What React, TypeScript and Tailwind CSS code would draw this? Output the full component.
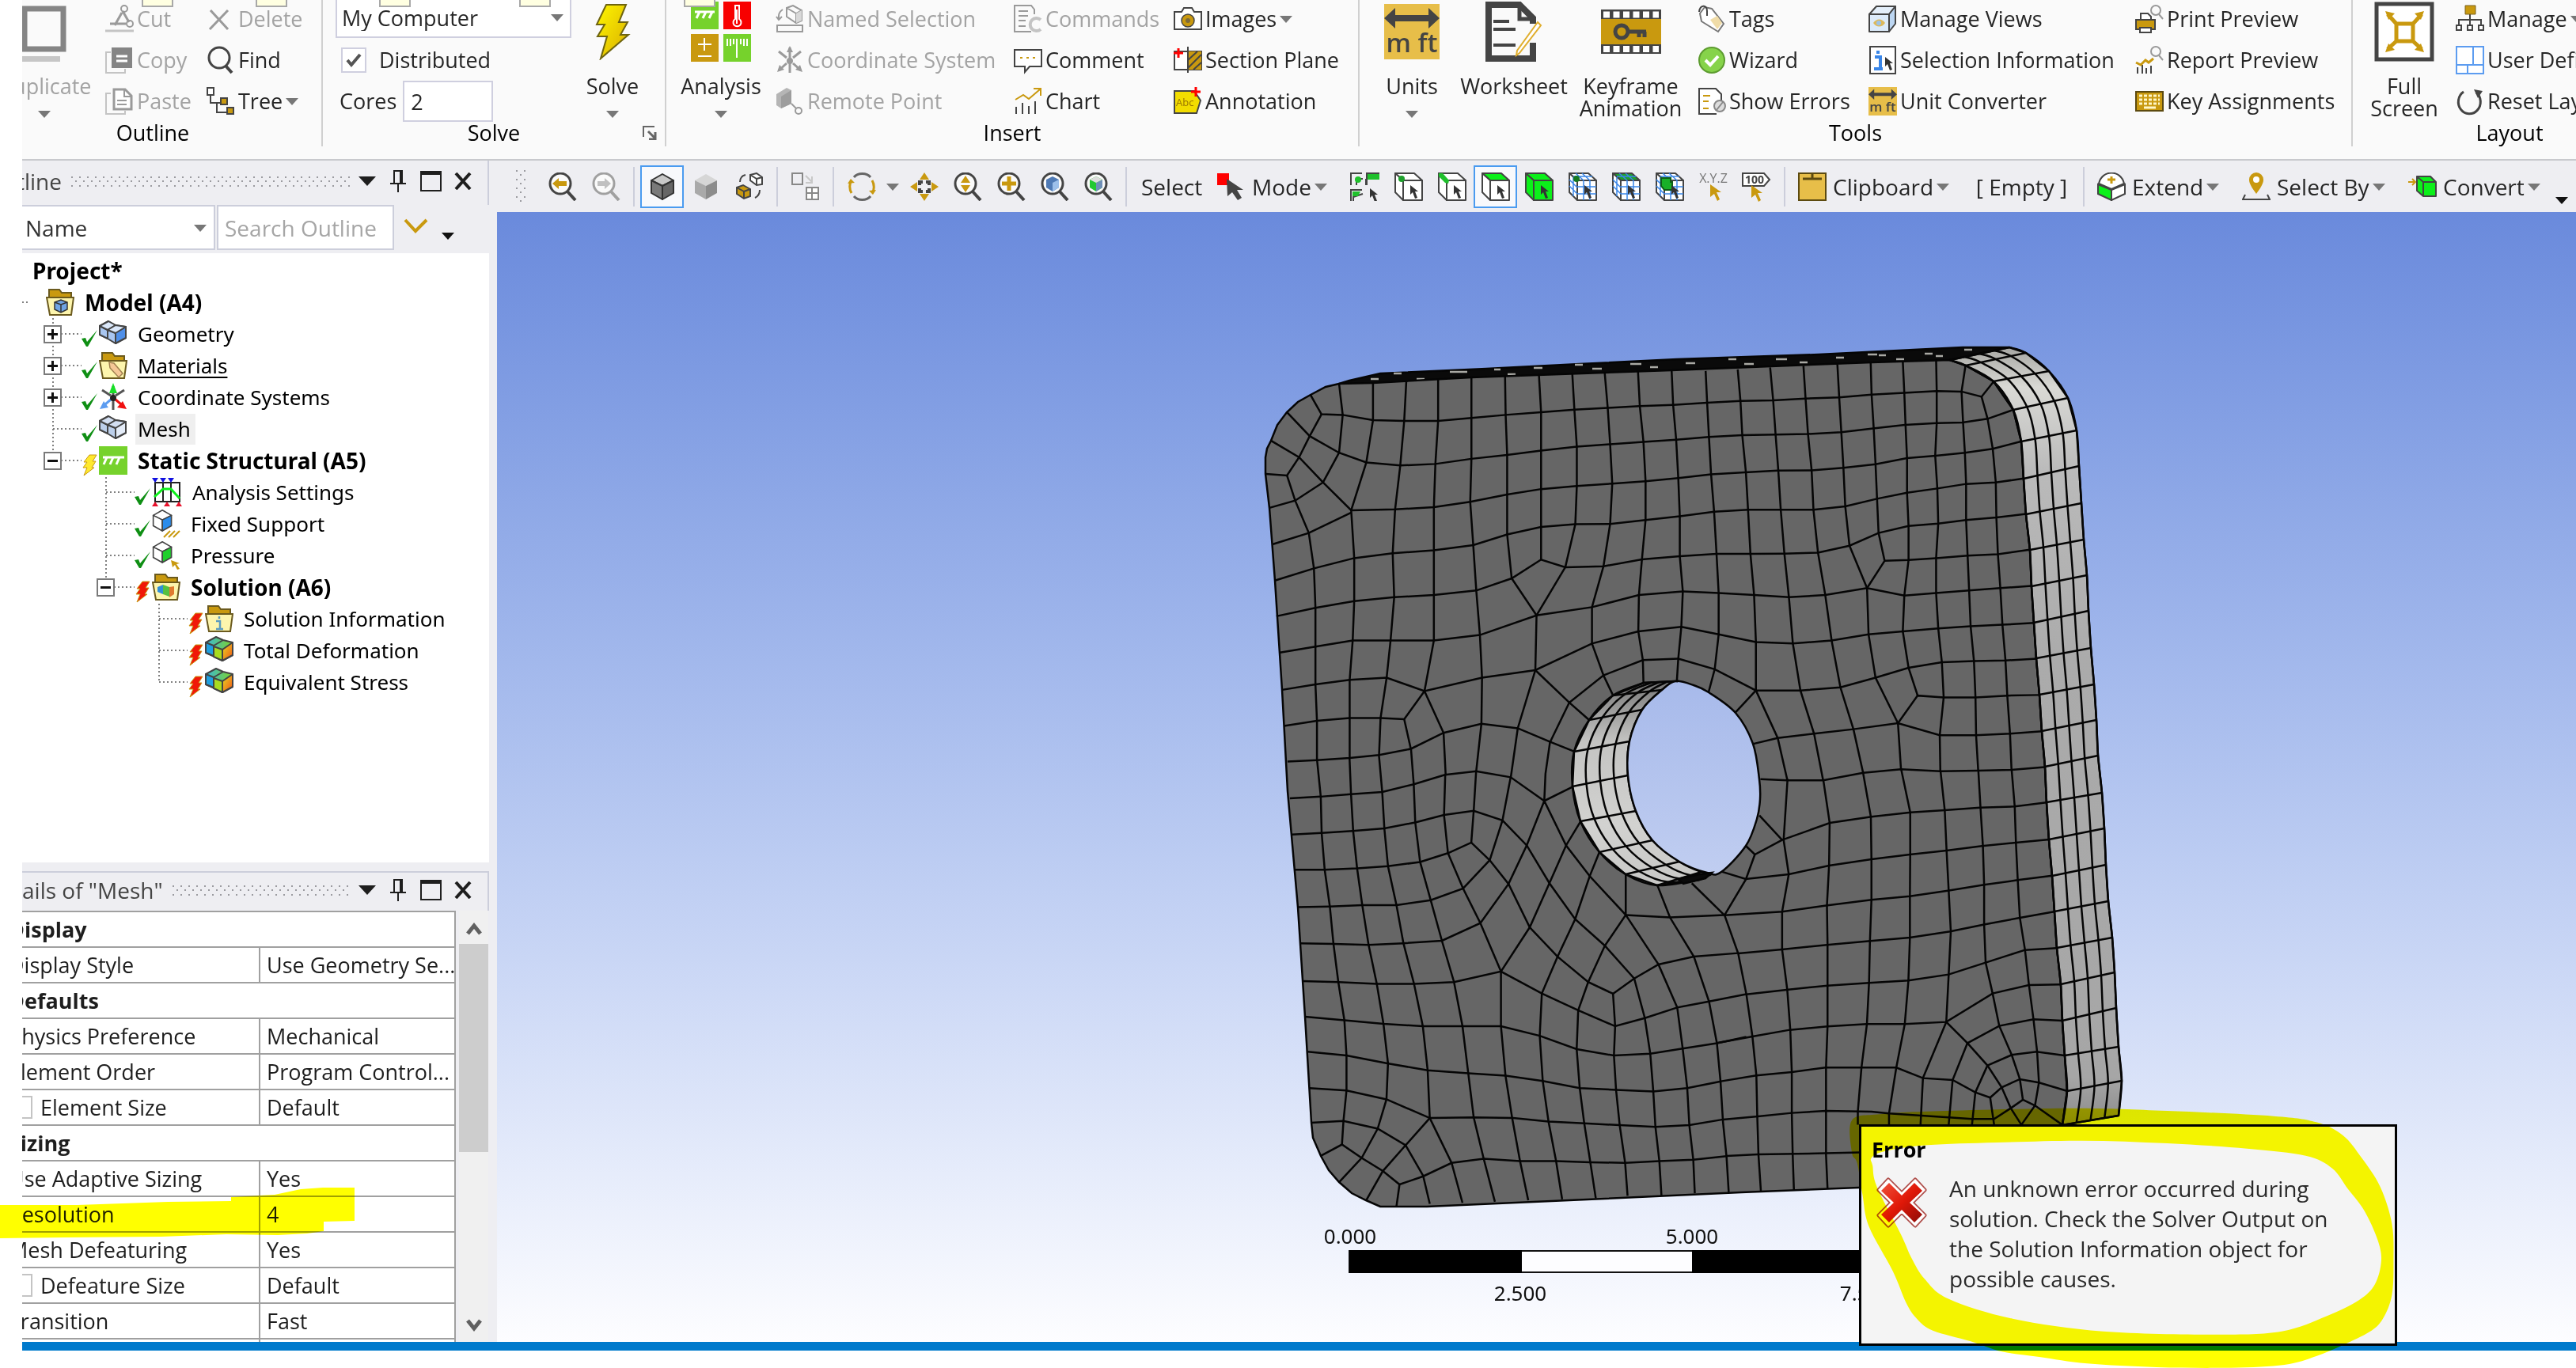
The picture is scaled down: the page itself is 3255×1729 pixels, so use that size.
import React from 'react';

type Pt = [number, number];

const DARK = '#444444';
const GOLD = '#c9990f';
const GREY = '#9a9a9a';

/* ---------- geometry helpers ---------- */

const toPts = (s: string): Pt[] => s.split(' ').map((p) => p.split(',').map(Number) as Pt);

const smooth = (pts: Pt[], closed = false) => {
  const n = pts.length;
  const at = (i: number) => (closed ? pts[(i + n) % n] : pts[Math.max(0, Math.min(n - 1, i))]);
  let d = `M${pts[0][0]} ${pts[0][1]}`;
  for (let i = 0; i < (closed ? n : n - 1); i++) {
    const [a, b, c, e] = [at(i - 1), at(i), at(i + 1), at(i + 2)];
    d += `C${b[0] + (c[0] - a[0]) / 6} ${b[1] + (c[1] - a[1]) / 6} ${c[0] - (e[0] - b[0]) / 6} ${c[1] - (e[1] - b[1]) / 6} ${c[0]} ${c[1]}`;
  }
  return closed ? d + 'Z' : d;
};

const between = (a: Pt[], b: Pt[], t: number): Pt[] =>
  a.map((p, i) => [p[0] + (b[i][0] - p[0]) * t, p[1] + (b[i][1] - p[1]) * t]);

/* ---------- small icons ---------- */

interface IconProps {
  w?: number;
  h?: number;
  box?: string;
  children: React.ReactNode;
}

const Icon: React.FC<IconProps> = ({ w = 36, h = 36, box, children }) => (
  <svg width={w} height={h} viewBox={box ?? `0 0 ${w} ${h}`} fill="none" className="shrink-0" aria-hidden="true">
    {children}
  </svg>
);

const Caret = ({ color = '#777777', w = 16 }: { color?: string; w?: number }) => (
  <Icon w={w} h={10} box="0 0 16 10">
    <path d="M0 1h16L8 10z" fill={color} />
  </Icon>
);

const Mag = ({ color = DARK, children }: { color?: string; children?: React.ReactNode }) => (
  <Icon>
    <ellipse cx="15" cy="14" rx="13" ry="13" fill="#fafafa" stroke={color} strokeWidth="3" />
    <path d="M24 24l10 11" stroke={color} strokeWidth="4" />
    {children}
  </Icon>
);

interface CubeProps {
  top: string;
  left: string;
  right: string;
  line?: string;
}

const IsoShape = ({ top, left, right, line = DARK }: CubeProps) => (
  <g stroke={line} strokeWidth="2" strokeLinejoin="round">
    <path d="M2 9l14-8 14 8-14 7z" fill={top} />
    <path d="M2 9l14 7v17L2 25z" fill={left} />
    <path d="M30 9l-14 7v17l14-8z" fill={right} />
  </g>
);

const IsoCube = (p: CubeProps) => (
  <Icon w={32} h={34}>
    <IsoShape {...p} />
  </Icon>
);

const TwinCubes = ({ a, b, c, d }: { a: string; b: string; c: string; d: string }) => (
  <Icon>
    <g stroke={DARK} strokeWidth="2" strokeLinejoin="round">
      <path d="M1 8l11-6 9 5 13 2v14l-13 7-9-6-11-5z" fill={a} />
      <path d="M1 8l10 5v11L1 19z" fill={b} />
      <path d="M11 13l10 4v13l-10-6z" fill={c} />
      <path d="M34 9v14l-13 7V16z" fill={d} />
      <path d="M1 8l11-6 9 5-10 6z" fill={a} />
      <path d="M11 13l10-6 13 2-13 8z" fill={a} />
    </g>
  </Icon>
);

const Pointer = ({ x = 20, y = 16, color = '#333333' }: { x?: number; y?: number; color?: string }) => (
  <path d={`M${x} ${y}v12l3-3 3 8 3-1-3-8h4z`} fill={color} />
);

interface SelectCubeProps {
  top?: string;
  front?: string;
  side?: string;
  grid?: boolean;
  children?: React.ReactNode;
}

const SelectCube = ({ top = '#fff', front = '#fff', side = '#fff', grid, children }: SelectCubeProps) => (
  <Icon>
    <g stroke={DARK} strokeWidth="2" strokeLinejoin="round">
      <path d="M1 1h24l10 9H11z" fill={top} />
      <path d="M1 1l10 9v25L1 25z" fill={side} />
      <path d="M11 10h24v25H11z" fill={front} />
    </g>
    {grid && (
      <path d="M19 10v25M27 10v25M11 18h24M11 27h24M9 1l10 9M17 1l10 9M1 9l10 10M1 17l10 10M6 6v24M6 5h24" stroke="#3a86e8" strokeWidth="1.5" />
    )}
    {children}
    <Pointer x={20} y={16} />
  </Icon>
);

const Folder = ({ children }: { children?: React.ReactNode }) => (
  <Icon>
    <path d="M4 13V2h13l3 4h12v8z" fill="#c9990f" stroke="#6b5a1e" strokeWidth="2" />
    <path d="M1 12h34l-3 22H5z" fill="#fdf5ad" stroke="#6b5a1e" strokeWidth="2" />
    {children}
  </Icon>
);

const Check = () => (
  <Icon w={20} h={22}>
    <path d="M0 11l5-1 2 5L20 0 8 21H6z" fill="#0f8f14" />
  </Icon>
);

const Bolt = ({ color, edge = '#c9990f' }: { color: string; edge?: string }) => (
  <Icon w={20} h={28}>
    <path d="M10 1h9l-5 8h4l-5 8h3L3 27l4-10H2l5-7H3z" fill={color} stroke={edge} strokeWidth="1" />
  </Icon>
);

const StructuralTile = ({ w = 36 }: { w?: number }) => (
  <Icon w={w} h={w} box="0 0 36 36">
    <path d="M0 0h36v36H0z" fill="#76d22c" />
    <path d="M5 14h27M10 14l-4 9M18 14l-4 9M26 14l-4 9" stroke="#fff" strokeWidth="3" />
  </Icon>
);

const MftTile = ({ w, h }: { w: number; h: number }) => (
  <Icon w={w} h={h} box="0 0 70 70">
    <path d="M0 0h70v70H0z" fill="#e7be49" />
    <path d="M0 18L14 5v9h42V5l14 13-14 13v-9H14v9z" fill={DARK} />
    <text x="35" y="61" textAnchor="middle" fontSize="33" fontWeight="600" fill={DARK} fontFamily="'Open Sans', sans-serif">m ft</text>
  </Icon>
);

const ico = {
  duplicate: (
    <Icon w={60} h={76}>
      <path d="M5 9h49v51H5z" fill="#fafafa" stroke="#858585" strokeWidth="7" />
      <path d="M0 69h50v7H0z" fill="#c6c6c6" />
    </Icon>
  ),
  cut: (
    <Icon>
      <path d="M0 33h36" stroke="#c4c4c4" strokeWidth="3" />
      <path d="M6 24h20M22 8l8 14M21 10L12 26" stroke={GREY} strokeWidth="3" />
      <circle cx="24" cy="5" r="4" stroke={GREY} strokeWidth="2" />
      <circle cx="31" cy="24" r="4" stroke={GREY} strokeWidth="2" />
    </Icon>
  ),
  copy: (
    <Icon>
      <path d="M7 8H1v26h24v-5" stroke="#c4c4c4" strokeWidth="2" />
      <path d="M8 2h26v26H8z" fill="#858585" />
      <path d="M14 13h14M14 19h14" stroke="#fff" strokeWidth="3" />
    </Icon>
  ),
  paste: (
    <Icon>
      <path d="M7 8H1v26h24v-4" stroke="#c4c4c4" strokeWidth="2" />
      <path d="M11 3h14l8 8v17H11z" fill="#fff" stroke={GREY} strokeWidth="3" />
      <path d="M24 3v9h9M15 17h12M15 22h12" stroke={GREY} strokeWidth="2" />
    </Icon>
  ),
  del: (
    <Icon>
      <path d="M5 7l22 24M27 7L4 31" stroke={GREY} strokeWidth="3" />
    </Icon>
  ),
  find: (
    <Icon>
      <circle cx="16" cy="15" r="13" stroke={DARK} strokeWidth="3" />
      <path d="M24 25l8 9" stroke={DARK} strokeWidth="4" />
    </Icon>
  ),
  tree: (
    <Icon>
      <path d="M5 10v10h12M13 20v12h12" stroke={DARK} strokeWidth="2" />
      <path d="M1 1h8v9H1z" fill="#fff" stroke={DARK} strokeWidth="2" />
      <path d="M18 14h8v8h-8zM26 26h8v8h-8z" fill={GOLD} stroke={DARK} strokeWidth="2" />
    </Icon>
  ),
  bolt: (
    <Icon w={46} h={72}>
      <path d="M15 2h25L31 24h11l-9 16h10L8 70l8-28H4l9-15H3z" fill="url(#boltFill)" stroke="#6e6410" strokeWidth="2" />
      <defs>
        <linearGradient id="boltFill" x1="0" y1="0" x2="1" y2="1">
          <stop offset="0" stopColor="#fff700" />
          <stop offset="1" stopColor="#d9ae00" />
        </linearGradient>
      </defs>
    </Icon>
  ),
  launcher: (
    <Icon w={18} h={18}>
      <path d="M1 14V1h14" stroke="#666" strokeWidth="2" />
      <path d="M7 7l8 8M16 8v9H8" stroke="#666" strokeWidth="3" />
    </Icon>
  ),
  analysis: (
    <Icon w={76} h={76}>
      <path d="M0 0h35v35H0zM41 41h35v35H41z" fill="#76d22c" />
      <path d="M41 0h35v35H41z" fill="#f80000" />
      <path d="M0 41h35v35H0z" fill="#c9990f" />
      <path d="M5 13h25M11 13l-4 8M19 13l-4 8M27 13l-4 8" stroke="#fff" strokeWidth="3" />
      <path d="M56 5h5v17a5 5 0 11-5 0z" stroke="#fff" strokeWidth="2" />
      <path d="M58 10v18M17 46v16M9 54h17M9 69h17M58 47v24M46 47v9M50 47v9M54 47v7M63 47v7M67 47v9M71 47v9" stroke="#fff" strokeWidth="2" />
    </Icon>
  ),
  namedSelection: (
    <Icon>
      <path d="M2 26h32v8H2z" stroke={GREY} strokeWidth="2" />
      <path d="M14 4l8-3 11 6v13l-7 3-12-8zM14 4l12 7v12M26 11l7-4M9 6C3 10 4 14 4 18M1 15l3 4 4-4" stroke={GREY} strokeWidth="2" />
      <path d="M26 11l7-4v13l-7 3z" fill="#d8d8d8" />
    </Icon>
  ),
  coordSystem: (
    <Icon>
      <path d="M18 18V2M18 20v14M14 15L4 7M22 15l10-8M14 22L4 31M22 22l10 9" stroke={GREY} strokeWidth="3" />
      <path d="M18 0l4 8h-8zM2 33l3-9 6 6zM34 33l-9-3 6-6z" fill={GREY} />
      <circle cx="18" cy="19" r="4" fill={GREY} />
    </Icon>
  ),
  remotePoint: (
    <Icon>
      <path d="M1 9L14 1l6 3v17L7 27l-6-4z" fill="#b5b5b5" />
      <path d="M7 12l13-8v17L7 27z" fill="#9d9d9d" />
      <path d="M20 21l6 6" stroke={GREY} strokeWidth="2" />
      <circle cx="29" cy="30" r="4" stroke={GREY} strokeWidth="2" />
    </Icon>
  ),
  commands: (
    <Icon>
      <path d="M22 34H1V1h21l4 5v6M6 8h12M6 14h12M6 20h9M6 27h9" stroke={GREY} strokeWidth="2" />
      <path d="M34 19a8 8 0 100 12" stroke="#c4c4c4" strokeWidth="4" />
    </Icon>
  ),
  comment: (
    <Icon>
      <path d="M1 5h34v21H20l-6 7v-7H1z" fill="#fff" stroke={DARK} strokeWidth="2" />
      <path d="M8 15h3M16 15h3M24 15h3" stroke={GOLD} strokeWidth="2" />
    </Icon>
  ),
  chart: (
    <Icon>
      <path d="M3 34v-9M11 34V20M19 34V24M27 34V18" stroke={DARK} strokeWidth="2" />
      <path d="M2 16l10-6 7 5L33 3M25 2h9v9" stroke={GOLD} strokeWidth="2" />
    </Icon>
  ),
  images: (
    <Icon>
      <path d="M1 9h9l3-5h10l3 5h9v22H1z" fill="#fff" stroke={DARK} strokeWidth="2" />
      <circle cx="18" cy="20" r="8" fill={GOLD} stroke={DARK} strokeWidth="1.5" />
      <circle cx="18" cy="20" r="3" fill="#7c6a3a" />
    </Icon>
  ),
  sectionPlane: (
    <Icon>
      <path d="M1 7h34v23H1z" fill="#fff" stroke={DARK} strokeWidth="2" />
      <path d="M18 7h17v23H18z" fill={GOLD} />
      <path d="M18 18L30 7M18 28L35 11M25 30l10-9" stroke={DARK} strokeWidth="2" />
      <path d="M18 1v33" stroke={DARK} strokeWidth="2" />
      <path d="M6 3v12M0 9h12" stroke="#f00" strokeWidth="3" />
    </Icon>
  ),
  annotation: (
    <Icon>
      <path d="M1 5h25l8 12-5 16H1z" fill="#f2dc00" stroke={DARK} strokeWidth="2" />
      <text x="3" y="24" fontSize="13" fill="#9a7600" fontFamily="'Open Sans', sans-serif">Abc</text>
      <path d="M28 0v12M22 6h12" stroke="#f00" strokeWidth="3" />
    </Icon>
  ),
  worksheet: (
    <Icon w={72} h={76}>
      <path d="M60 52v20H4V4h39l17 17v7" stroke={DARK} strokeWidth="8" />
      <path d="M43 4v18h18" stroke={DARK} strokeWidth="5" />
      <path d="M10 25h20M10 35h28M10 55h28" stroke={DARK} strokeWidth="4" />
      <path d="M66 26l4 4-27 35-4 3 1-6z" fill="#fff" stroke="#e0ae2e" strokeWidth="2" />
    </Icon>
  ),
  keyframe: (
    <Icon w={76} h={56}>
      <path d="M0 0h76v56H0z" fill={DARK} />
      <path d="M0 12h76v32H0z" fill="#c9990f" />
      <path d="M3 6.500h70M3 50h70" stroke="#fff" strokeWidth="8" strokeDasharray="8 4.500" />
      <circle cx="26" cy="28" r="8" stroke={DARK} strokeWidth="5" />
      <path d="M33 28h24M48 28v7M55 28v7" stroke={DARK} strokeWidth="5" />
    </Icon>
  ),
  tags: (
    <Icon>
      <path d="M3 11l6-8 9 2 15 19-7 10L5 21z" fill="#fff" stroke="#777" strokeWidth="2" />
      <path d="M16 19l9-5 6 9-6 8z" fill="#f0dca8" />
      <path d="M2 9C3 0 12-1 12 8v6" stroke={DARK} strokeWidth="2" />
    </Icon>
  ),
  wizard: (
    <Icon>
      <circle cx="18" cy="18" r="16" fill="#86d34a" stroke="#5d9c30" strokeWidth="2" />
      <path d="M10 18l6 6 10-11" stroke="#fff" strokeWidth="4" />
    </Icon>
  ),
  showErrors: (
    <Icon>
      <path d="M24 34H2V2h21l7 7v8" fill="#fff" stroke={DARK} strokeWidth="2" />
      <path d="M7 11h9M7 18h7M7 27h7" stroke={GOLD} strokeWidth="2" />
      <circle cx="28" cy="24" r="7" fill="#ddd" stroke="#888" strokeWidth="2" />
      <path d="M24 29l8-10" stroke="#888" strokeWidth="2" />
    </Icon>
  ),
  manageViews: (
    <Icon>
      <g stroke={DARK} strokeWidth="2" strokeLinejoin="round">
        <path d="M1 12L10 2h24l-8 10z" fill="#e4effa" />
        <path d="M26 12l8-10v22l-8 10z" fill="#bcd6f2" />
        <path d="M1 12h25v22H1z" fill="#dcebfa" />
      </g>
      <path d="M6 23c4-6 11-6 15 0-4 6-11 6-15 0z" fill="#ddb95a" />
      <circle cx="13" cy="23" r="3" fill="#9cc3e8" />
    </Icon>
  ),
  selectionInfo: (
    <Icon>
      <path d="M2 1h32v34H2z" fill="#fff" stroke={DARK} strokeWidth="2" />
      <path d="M8 14h7v14M7 29h11M12 6v4" stroke="#3a86e8" strokeWidth="4" />
      <Pointer x={21} y={14} />
    </Icon>
  ),
  printPreview: (
    <Icon>
      <circle cx="26" cy="7" r="6" stroke="#999" strokeWidth="2" />
      <path d="M30 12l5 6" stroke="#999" strokeWidth="2" />
      <path d="M7 20V11h9l4 4v5" fill="#fff" stroke={DARK} strokeWidth="2" />
      <path d="M1 19h24v12H1z" fill={GOLD} stroke={DARK} strokeWidth="2" />
      <path d="M6 29h14v6H6z" fill="#fff" stroke={DARK} strokeWidth="2" />
    </Icon>
  ),
  reportPreview: (
    <Icon>
      <circle cx="26" cy="7" r="6" stroke="#999" strokeWidth="2" />
      <path d="M30 12l5 6" stroke="#999" strokeWidth="2" />
      <path d="M3 35v-8M9 35V24M14 35v-7M20 35V25" stroke={DARK} strokeWidth="2" />
      <path d="M1 21l6 3 6-6 4 3 6-5" stroke={GOLD} strokeWidth="3" />
    </Icon>
  ),
  keyboard: (
    <Icon>
      <path d="M1 6h34v24H1z" fill="#c9990f" stroke="#5c4a10" strokeWidth="2" />
      <path d="M5 11h26M5 16h26M5 21h26" stroke="#fff6c8" strokeWidth="3" strokeDasharray="4 2" />
      <path d="M11 26h15" stroke="#fff6c8" strokeWidth="3" />
    </Icon>
  ),
  fullScreen: (
    <Icon w={76} h={76}>
      <path d="M3 3h70v70H3z" fill="#fff" stroke={DARK} strokeWidth="5" />
      <path d="M28 28h21v22H28zM28 28L17 16M49 28l11-12M28 50L17 60M49 50l11 10" stroke={GOLD} strokeWidth="5" />
      <path d="M14 12l12 3-8 8zM63 12l-12 3 8 8zM14 64l12-3-8-8zM63 64l-12-3 8-8z" fill={GOLD} />
    </Icon>
  ),
  manage: (
    <Icon>
      <path d="M18 12v13M4 26v-7h28v7" stroke={DARK} strokeWidth="2" />
      <path d="M12 1h13v11H12z" fill={GOLD} stroke="#7a6320" strokeWidth="1" />
      <path d="M1 26h6v6H1zM15 26h6v6h-6zM29 26h6v6h-6z" fill="#fff" stroke={DARK} strokeWidth="2" />
    </Icon>
  ),
  userLayout: (
    <Icon>
      <path d="M1 1h34v34H1zM22 1v23M1 24h34M15 24v11" fill="#fff" stroke="#5c9cf0" strokeWidth="2" />
    </Icon>
  ),
  reset: (
    <Icon>
      <path d="M26 7A14 15 0 1110 6" stroke={DARK} strokeWidth="3" />
      <path d="M23 3l11 2-6 9z" fill={DARK} />
    </Icon>
  ),
  rotate: (
    <Icon>
      <path d="M8 6c5-6 16-6 21 0M29 30c-5 6-16 6-21 0" stroke="#666" strokeWidth="3" />
      <path d="M5 10c-3 4-3 11 0 16M31 26c3-4 3-11 0-16" stroke={GOLD} strokeWidth="3" />
      <path d="M0 14l4-6 5 5zM36 22l-4 6-5-5z" fill={GOLD} />
    </Icon>
  ),
  pan: (
    <Icon>
      <path d="M18 0l6 9H12zM18 36l6-9H12zM0 18l9-6v12zM36 18l-9-6v12z" fill={GOLD} />
      <path d="M10 10h6v4h-2v2h-4zM26 10h-6v4h2v2h4zM10 26h6v-4h-2v-2h-4zM26 26h-6v-4h2v-2h4z" fill={DARK} />
    </Icon>
  ),
  zoomPrev: (
    <Mag>
      <path d="M5 14l8-7v4h10v6H13v4z" fill={GOLD} />
    </Mag>
  ),
  zoomNext: (
    <Mag color="#a0a0a0">
      <path d="M24 14l-8-7v4H7v6h9v4z" fill="#c0c0c0" />
    </Mag>
  ),
  zoomUpDown: (
    <Mag>
      <path d="M15 4l6 9H9zM15 25l6-9H9z" fill={GOLD} />
    </Mag>
  ),
  zoomPlus: (
    <Mag>
      <path d="M15 5v18M6 14h18" stroke={GOLD} strokeWidth="5" />
    </Mag>
  ),
  zoomFit: (
    <Mag>
      <path d="M7 9l8-4 8 4v10l-8 5-8-5z" fill="#4f7ab5" />
      <path d="M15 13l8-4v10l-8 5z" fill="#9dc0ea" />
    </Mag>
  ),
  zoomSel: (
    <Mag>
      <path d="M7 9l8-4 8 4v10l-8 5-8-5z" fill="#23c832" />
      <path d="M15 13l8-4v10l-8 5z" fill="#6f8fb8" />
      <path d="M7 9l8-4 8 4-8 4z" fill="#ddd" />
    </Mag>
  ),
  swap: (
    <Icon>
      <path d="M19 3l8-2 7 5v9l-7 1-8-6zM19 3l8 5v8M27 8l7-2" fill="#fff" stroke={DARK} strokeWidth="2" />
      <path d="M2 19l8-3 9 5v9l-8 3-9-6z" fill={GOLD} stroke={DARK} strokeWidth="2" />
      <path d="M2 19l9 5v9M11 24l8-3M6 12c0-5 3-8 7-9M31 22c0 5-2 8-6 10" stroke={DARK} strokeWidth="2" />
    </Icon>
  ),
  boxes: (
    <Icon>
      <path d="M1 1h13v14H1z" stroke="#888" strokeWidth="2" />
      <path d="M18 4l8 8M26 5v8h-8" stroke="#c8c8c8" strokeWidth="2" />
      <path d="M19 19h15v15H19zM26 19v15M19 26h15" fill="#fff" stroke="#888" strokeWidth="2" />
    </Icon>
  ),
  mode: (
    <Icon>
      <path d="M0 1h15v15H0z" fill="#f00" />
      <path d="M12 8l1 22 6-5 7 10 5-3-6-10h8z" fill={DARK} />
    </Icon>
  ),
  selectGroup: (
    <Icon w={38}>
      <path d="M1 16V1h14M8 8h8M8 8v8M20 16V8M1 36V22h14" stroke={DARK} strokeWidth="2" />
      <path d="M21 1h16v8H21z" fill="#1fc02c" />
      <path d="M21 16V1h16M4 36v-5l12-4" stroke={DARK} strokeWidth="2" />
      <circle cx="10" cy="9" r="4" fill="#1fc02c" />
      <path d="M3 24h10l-3 6H3z" fill="#1fc02c" />
      <Pointer x={25} y={20} />
    </Icon>
  ),
  xyz: (
    <Icon w={40} h={38}>
      <text x="20" y="14" textAnchor="middle" fontSize="16" fill="#777" fontFamily="'Open Sans', sans-serif">X.Y.Z</text>
      <path d="M16 16v16l5-4 4 9 3-2-4-9h6z" fill={GOLD} />
    </Icon>
  ),
  tag100: (
    <Icon w={38} h={38}>
      <path d="M1 2h27l7 8-7 8H1z" fill="#fff" stroke={DARK} strokeWidth="2" />
      <text x="4" y="15" fontSize="14" fontWeight="700" fill={DARK} fontFamily="'Open Sans', sans-serif">100</text>
      <path d="M12 17v16l5-4 4 9 3-2-4-9h6z" fill={GOLD} />
    </Icon>
  ),
  clipboard: (
    <Icon>
      <path d="M1 1h34v34H1z" fill="#e7be49" stroke="#5c4a10" strokeWidth="2" />
      <path d="M6 8h24M18 2v6" stroke="#5c4a10" strokeWidth="3" />
    </Icon>
  ),
  extend: (
    <Icon>
      <path d="M2 14C6-4 30-4 34 14l-16 7z" fill="#fff" stroke={DARK} strokeWidth="2" />
      <path d="M1 15l17 7v13L1 27z" fill="#0cf01a" stroke={DARK} strokeWidth="2" />
      <path d="M35 15l-17 7v13l17-8z" fill="#fff" stroke={DARK} strokeWidth="2" />
      <path d="M18 5v9M13 9h10" stroke={GOLD} strokeWidth="3" />
    </Icon>
  ),
  selectBy: (
    <Icon>
      <path d="M18 27C9 15 9 11 9 9a9 9 0 0118 0c0 2 0 6-9 18z" fill={GOLD} />
      <circle cx="18" cy="9" r="4" fill="#fff" />
      <path d="M4 28l-3 6h34l-3-6" stroke={DARK} strokeWidth="2" />
    </Icon>
  ),
  convert: (
    <Icon>
      <path d="M0 12h9M5 8l4 4-4 4" stroke={GOLD} strokeWidth="2" />
      <g fill="#0cf01a" stroke={DARK} strokeWidth="2" strokeLinejoin="round">
        <path d="M11 5h17l7 7H19zM11 5l8 7v18l-8-7zM19 12h16v18H19z" />
      </g>
    </Icon>
  ),
  analysisSettings: (
    <Icon w={38}>
      <path d="M4 6h31v24H4zM14 6v24M24 6v24" stroke="#222" strokeWidth="2" />
      <path d="M3 24L14 14h10l11 12" stroke="#0cf01a" strokeWidth="3" />
      <path d="M0 0h8L4 6zM10 0h8l-4 6zM20 0h8l-4 6z" fill="#1010e0" />
      <path d="M0 36h8l-4-6zM15 36h8l-4-6zM30 36h8l-4-6z" fill="#e8102a" />
    </Icon>
  ),
  fixedSupport: (
    <Icon>
      <g transform="scale(.82)">
        <IsoShape top="#fff" left="#fff" right="#2a8cec" />
      </g>
      <path d="M15 35l8-8M21 35l8-8M27 35l8-8" stroke={GOLD} strokeWidth="2" />
    </Icon>
  ),
  pressure: (
    <Icon>
      <g transform="scale(.82)">
        <IsoShape top="#fff" left="#fff" right="#1fd02c" />
      </g>
      <path d="M24 24l11 4-4 1 4 6-3 1-3-6-3 3z" fill={GOLD} />
    </Icon>
  ),
  coordTree: (
    <Icon>
      <path d="M18 17V4M18 22v12M15 16L4 9M21 16l11-7" stroke="#555" strokeWidth="3" />
      <path d="M18 0l5 13H13z" fill="#18e028" />
      <path d="M15 21L8 27" stroke="#5c9cf0" strokeWidth="3" />
      <path d="M1 33l5-10 6 8z" fill="#5c9cf0" />
      <path d="M21 21l7 6" stroke="#f01010" strokeWidth="3" />
      <path d="M35 33l-5-10-7 8z" fill="#f01010" />
      <circle cx="18" cy="19" r="4" fill="#222" />
    </Icon>
  ),
};

/* ---------- ribbon ---------- */

interface RibbonItemProps {
  icon: React.ReactNode;
  label: string;
  disabled?: boolean;
  menu?: boolean;
}

const RibbonItem: React.FC<RibbonItemProps> = ({ icon, label, disabled, menu }) => (
  <button disabled={disabled} className="flex h-[52px] items-center gap-1 whitespace-nowrap text-[#262626] disabled:text-[#a3a3a3]">
    {icon}
    <span>{label}</span>
    {menu && <Caret />}
  </button>
);

const BigButton: React.FC<{ icon: React.ReactNode; lines: string[]; menu?: boolean; disabled?: boolean; width: string }> = ({
  icon,
  lines,
  menu,
  disabled,
  width,
}) => (
  <button disabled={disabled} className={`flex shrink-0 flex-col items-center text-[#262626] disabled:text-[#a3a3a3] ${width}`}>
    <span className="flex h-[83px] items-center justify-center">{icon}</span>
    <span className="mt-3.5 flex flex-col items-center whitespace-nowrap leading-7">
      {lines.map((line) => (
        <span key={line}>{line}</span>
      ))}
    </span>
    {menu && (
      <span className="mt-4">
        <Caret />
      </span>
    )}
  </button>
);

const RibbonGroup: React.FC<{ label: string; className?: string; labelClass?: string; launcher?: boolean; children: React.ReactNode }> = ({
  label,
  className = '',
  labelClass = '',
  launcher,
  children,
}) => (
  <section className={`flex h-[185px] shrink-0 flex-col border-r-2 border-[#d0d0d0] ${className}`}>
    <div className="-mt-0.5 flex h-[154px] items-start">{children}</div>
    <div className={`flex h-8 items-center justify-center ${labelClass}`}>
      <span className={launcher ? 'flex-1 pl-7 text-center' : ''}>{label}</span>
      {launcher && (
        <button aria-label="Solve options" className="mr-2.5">
          {ico.launcher}
        </button>
      )}
    </div>
  </section>
);

const Ribbon = () => (
  <header className="relative flex h-[203px] overflow-hidden border-b-2 border-[#c8c9cd] bg-[#fafafa] text-[27px] leading-8">
    <RibbonGroup label="Outline" labelClass="pr-12">
      <BigButton icon={ico.duplicate} lines={['Duplicate']} menu disabled width="w-14" />
      <div className="ml-[49px] w-32">
        <RibbonItem icon={ico.cut} label="Cut" disabled />
        <RibbonItem icon={ico.copy} label="Copy" disabled />
        <RibbonItem icon={ico.paste} label="Paste" disabled />
      </div>
      <div className="w-[145px]">
        <RibbonItem icon={ico.del} label="Delete" disabled />
        <RibbonItem icon={ico.find} label="Find" />
        <RibbonItem icon={ico.tree} label="Tree" menu />
      </div>
    </RibbonGroup>

    <RibbonGroup label="Solve" launcher>
      <div className="ml-4 w-[298px]">
        <div className="relative h-[52px]">
          <select aria-label="Solve target" className="h-[50px] w-full appearance-none border-2 border-[#cfcfdf] bg-white px-1.5 text-[#262626]">
            <option>My Computer</option>
          </select>
          <span className="pointer-events-none absolute right-2.5 top-0 flex h-[48px] items-center">
            <Caret />
          </span>
        </div>
        <label className="ml-[7px] flex h-[52px] items-center gap-4 text-[#262626]">
          <span className="relative flex h-8 w-8">
            <input type="checkbox" defaultChecked className="h-8 w-8 appearance-none border-2 border-[#cfcfdf] bg-white" />
            <svg viewBox="0 0 32 32" className="pointer-events-none absolute inset-0" aria-hidden="true">
              <path d="M8 16l5 6L24 9" stroke="#555" strokeWidth="4" fill="none" />
            </svg>
          </span>
          Distributed
        </label>
        <div className="ml-[5px] flex h-[52px] items-center gap-2 text-[#262626]">
          <label htmlFor="cores">Cores</label>
          <input id="cores" defaultValue="2" className="h-[52px] w-[114px] border-2 border-[#cfcfdf] bg-white px-2" />
        </div>
      </div>
      <BigButton icon={ico.bolt} lines={['Solve']} menu width="w-[104px]" />
      <div className="w-[14px]" />
    </RibbonGroup>

    <RibbonGroup label="Insert">
      <BigButton icon={ico.analysis} lines={['Analysis']} menu width="w-[138px]" />
      <div className="w-[301px]">
        <RibbonItem icon={ico.namedSelection} label="Named Selection" disabled />
        <RibbonItem icon={ico.coordSystem} label="Coordinate System" disabled />
        <RibbonItem icon={ico.remotePoint} label="Remote Point" disabled />
      </div>
      <div className="w-[202px]">
        <RibbonItem icon={ico.commands} label="Commands" disabled />
        <RibbonItem icon={ico.comment} label="Comment" />
        <RibbonItem icon={ico.chart} label="Chart" />
      </div>
      <div className="w-[233px]">
        <RibbonItem icon={ico.images} label="Images" menu />
        <RibbonItem icon={ico.sectionPlane} label="Section Plane" />
        <RibbonItem icon={ico.annotation} label="Annotation" />
      </div>
    </RibbonGroup>

    <RibbonGroup label="Tools">
      <BigButton icon={<MftTile w={70} h={70} />} lines={['Units']} menu width="w-[132px]" />
      <BigButton icon={ico.worksheet} lines={['Worksheet']} width="w-[126px]" />
      <BigButton icon={ico.keyframe} lines={['Keyframe', 'Animation']} width="w-[169px]" />
      <div className="w-[216px]">
        <RibbonItem icon={ico.tags} label="Tags" />
        <RibbonItem icon={ico.wizard} label="Wizard" />
        <RibbonItem icon={ico.showErrors} label="Show Errors" />
      </div>
      <div className="w-[337px]">
        <RibbonItem icon={ico.manageViews} label="Manage Views" />
        <RibbonItem icon={ico.selectionInfo} label="Selection Information" />
        <RibbonItem icon={<MftTile w={36} h={36} />} label="Unit Converter" />
      </div>
      <div className="w-[273px]">
        <RibbonItem icon={ico.printPreview} label="Print Preview" />
        <RibbonItem icon={ico.reportPreview} label="Report Preview" />
        <RibbonItem icon={ico.keyboard} label="Key Assignments" />
      </div>
    </RibbonGroup>

    <RibbonGroup label="Layout" className="w-[398px]">
      <BigButton icon={ico.fullScreen} lines={['Full', 'Screen']} width="w-[130px]" />
      <div>
        <RibbonItem icon={ico.manage} label="Manage" menu />
        <RibbonItem icon={ico.userLayout} label="User Defined" menu />
        <RibbonItem icon={ico.reset} label="Reset Layout" />
      </div>
    </RibbonGroup>

    {/* lower edges of the key tips */}
    {['left-[151px]', 'left-[295px]', 'left-[451px]', 'left-[628px]', 'left-[836px]'].map((pos) => (
      <span key={pos} className={`absolute top-0 h-[9px] w-10 border-2 border-t-0 border-[#a8a8a8] bg-[#ffffe1] ${pos}`} />
    ))}
  </header>
);

/* ---------- graphics toolbar ---------- */

const Tool: React.FC<{ label: string; active?: boolean; children: React.ReactNode }> = ({ label, active, children }) => (
  <button
    aria-label={label}
    className={`flex h-[54px] w-[55px] shrink-0 items-center justify-center ${active ? 'border-2 border-[#4a9bf0] bg-[#f8f9fc]' : ''}`}
  >
    {children}
  </button>
);

const TextTool: React.FC<{ icon: React.ReactNode; label: string; width: string }> = ({ icon, label, width }) => (
  <button className={`flex h-[54px] shrink-0 items-center whitespace-nowrap pl-[9px] ${width}`}>
    {icon}
    <span className="ml-2 mr-1">{label}</span>
    <Caret />
  </button>
);

const Divider = () => <span className="mx-[7px] h-[50px] w-0.5 shrink-0 bg-[#cccedb]" />;

const Dots = ({ id, className }: { id: string; className: string }) => (
  <svg className={className} aria-hidden="true">
    <defs>
      <pattern id={id} width="10" height="11" patternUnits="userSpaceOnUse">
        <path d="M0 0h2v2H0zM5 5h2v2H5z" fill="#9b9ba0" />
      </pattern>
    </defs>
    <rect width="100%" height="100%" fill={`url(#${id})`} />
  </svg>
);

const Toolbar = () => (
  <div className="flex h-[65px] items-center overflow-hidden bg-[#eeeef2] text-[28px] text-[#262626]">
    <Dots id="gripDots" className="ml-6 mr-[17px] h-[42px] w-[14px] shrink-0" />
    <Tool label="Previous view">{ico.zoomPrev}</Tool>
    <Tool label="Next view">{ico.zoomNext}</Tool>
    <Divider />
    <Tool label="Shaded with edges" active>
      <IsoCube top="#c9c9c9" left="#7a7a7a" right="#666666" line="#333333" />
    </Tool>
    <Tool label="Shaded">
      <IsoCube top="#d6d6d6" left="#a9a9a9" right="#8c8c8c" line="none" />
    </Tool>
    <Tool label="Swap bodies">{ico.swap}</Tool>
    <Divider />
    <Tool label="Viewports">{ico.boxes}</Tool>
    <Divider />
    <Tool label="Rotate">{ico.rotate}</Tool>
    <button aria-label="Rotate options" className="flex w-6 shrink-0 justify-center">
      <Caret />
    </button>
    <Tool label="Pan">{ico.pan}</Tool>
    <Tool label="Zoom">{ico.zoomUpDown}</Tool>
    <Tool label="Box zoom">{ico.zoomPlus}</Tool>
    <Tool label="Zoom to fit">{ico.zoomFit}</Tool>
    <Tool label="Zoom to selection">{ico.zoomSel}</Tool>
    <Divider />
    <span className="w-[98px] shrink-0 pl-[11px]">Select</span>
    <TextTool icon={ico.mode} label="Mode" width="w-[168px]" />
    <Tool label="Smart select">{ico.selectGroup}</Tool>
    <Tool label="Vertex">
      <SelectCube>
        <circle cx="9" cy="8" r="4" fill="#1fa02c" />
      </SelectCube>
    </Tool>
    <Tool label="Edge">
      <SelectCube>
        <path d="M1 1l5 0 8 9-1 4-4-1-8-8z" fill="#1fc02c" />
      </SelectCube>
    </Tool>
    <Tool label="Face" active>
      <SelectCube top="#0cf01a" />
    </Tool>
    <Tool label="Body">
      <SelectCube top="#0cf01a" front="#0cf01a" side="#0cf01a" />
    </Tool>
    <Tool label="Node">
      <SelectCube grid>
        <circle cx="10" cy="8" r="4" fill="#157a20" />
      </SelectCube>
    </Tool>
    <Tool label="Element face">
      <SelectCube grid top="#1fa02c" />
    </Tool>
    <Tool label="Element">
      <SelectCube grid>
        <path d="M7 7h12v5h2v10H11l-4-5z" fill="#18b028" stroke="#0f5c18" strokeWidth="2" />
      </SelectCube>
    </Tool>
    <Tool label="Coordinates">{ico.xyz}</Tool>
    <Tool label="Label">{ico.tag100}</Tool>
    <Divider />
    <TextTool icon={ico.clipboard} label="Clipboard" width="w-[217px]" />
    <span className="w-[145px] shrink-0 pl-1 text-center">[ Empty ]</span>
    <Divider />
    <TextTool icon={ico.extend} label="Extend" width="w-[183px]" />
    <TextTool icon={ico.selectBy} label="Select By" width="w-[210px]" />
    <TextTool icon={ico.convert} label="Convert" width="w-[194px]" />
    <button aria-label="More tools" className="mt-[34px] shrink-0">
      <Caret color="#111111" w={18} />
    </button>
  </div>
);

/* ---------- outline tree ---------- */

interface TreeNode {
  label: string;
  depth: number;
  icon?: React.ReactNode;
  status?: React.ReactNode;
  toggle?: '+' | '-';
  bold?: boolean;
  className?: string;
}

const resultCubes = (
  <Icon>
    <defs>
      <linearGradient id="contourTop" x1="0" y1="0" x2="1" y2="0">
        <stop offset="0" stopColor="#38b8d8" />
        <stop offset="1" stopColor="#7fd428" />
      </linearGradient>
      <linearGradient id="contourSide" x1="0" y1="0" x2="1" y2="1">
        <stop offset="0" stopColor="#e8e020" />
        <stop offset="1" stopColor="#f05018" />
      </linearGradient>
    </defs>
    <g stroke={DARK} strokeWidth="2" strokeLinejoin="round">
      <path d="M1 8l13-7 9 4 12 3v16l-13 7-10-5-11-5z" fill="url(#contourTop)" />
      <path d="M1 8l10 4v13L1 21z" fill="#1fa0e0" />
      <path d="M11 13l11 4v14l-11-5z" fill="#a8dc20" />
      <path d="M35 8v16l-13 7V17z" fill="url(#contourSide)" />
      <path d="M11 12l12-7" />
    </g>
  </Icon>
);

const nodes: TreeNode[] = [
  { label: 'Project*', depth: 0, bold: true },
  {
    label: 'Model (A4)',
    depth: 1,
    bold: true,
    icon: (
      <Folder>
        <path d="M11 18l8-3 8 3v9l-8 4-8-4z" fill="#6fa4e4" stroke="#333" strokeWidth="1.5" />
        <path d="M11 18l8 3 8-3M19 21v10" stroke="#333" strokeWidth="1.5" />
      </Folder>
    ),
  },
  { label: 'Geometry', depth: 2, toggle: '+', status: <Check />, icon: <TwinCubes a="#dbe8fa" b="#a9c6f0" c="#a9c6f0" d="#4f8fe8" /> },
  {
    label: 'Materials',
    depth: 2,
    toggle: '+',
    status: <Check />,
    className: 'underline underline-offset-4',
    icon: (
      <Folder>
        <path d="M13 14l6 1 11 13-5 5-11-12z" fill="#f6c896" stroke="#a08050" strokeWidth="1.5" />
      </Folder>
    ),
  },
  { label: 'Coordinate Systems', depth: 2, toggle: '+', status: <Check />, icon: ico.coordTree },
  { label: 'Mesh', depth: 2, status: <Check />, className: 'bg-[#efefef] pr-1.5', icon: <TwinCubes a="#d3dff2" b="#bccfea" c="#bccfea" d="#e4ecf8" /> },
  { label: 'Static Structural (A5)', depth: 2, toggle: '-', bold: true, status: <Bolt color="#ffe92e" />, icon: <StructuralTile /> },
  { label: 'Analysis Settings', depth: 3, status: <Check />, icon: ico.analysisSettings },
  { label: 'Fixed Support', depth: 3, status: <Check />, icon: ico.fixedSupport },
  { label: 'Pressure', depth: 3, status: <Check />, icon: ico.pressure },
  {
    label: 'Solution (A6)',
    depth: 3,
    toggle: '-',
    bold: true,
    status: <Bolt color="#f01808" />,
    icon: (
      <Folder>
        <path d="M7 18l7-3v12l-7-3z" fill="#2f8fd8" />
        <path d="M14 15l8 3v12l-8-3z" fill="#55c040" />
        <path d="M22 18l6-1v10l-6 4z" fill="#e07a30" />
      </Folder>
    ),
  },
  {
    label: 'Solution Information',
    depth: 4,
    status: <Bolt color="#f01808" />,
    icon: (
      <Folder>
        <path d="M14 21h5v9M14 31h9M18 15v3" stroke="#5c9cc0" strokeWidth="2.500" />
      </Folder>
    ),
  },
  { label: 'Total Deformation', depth: 4, status: <Bolt color="#f01808" />, icon: resultCubes },
  { label: 'Equivalent Stress', depth: 4, status: <Bolt color="#f01808" />, icon: resultCubes },
];

const indent = ['pl-[13px]', 'pl-[30px]', 'pl-[27px]', 'pl-[94px]', 'pl-[161px]'];

const TreeRow: React.FC<{ node: TreeNode }> = ({ node }) => (
  <li className={`flex h-10 items-center whitespace-nowrap ${indent[node.depth]}`}>
    {node.depth > 1 && (
      <span className="mr-[25px] flex w-[23px] shrink-0">
        {node.toggle && (
          <button aria-label={`Toggle ${node.label}`}>
            <Icon w={23} h={23}>
              <path d="M1 1h21v21H1z" fill="#fff" stroke="#7a7a7a" strokeWidth="2" />
              <path d={node.toggle === '+' ? 'M5 11.500h13M11.500 5v13' : 'M5 11.500h13'} stroke="#111" strokeWidth="3" />
            </Icon>
          </button>
        )}
      </span>
    )}
    {node.status && <span className="flex w-[22px] shrink-0 pt-3">{node.status}</span>}
    {node.icon}
    <span className={`flex h-[39px] items-center ${node.icon ? 'ml-2.5 pl-[3px]' : ''} ${node.bold ? 'text-[28px] font-bold' : 'text-[26px]'} ${node.className ?? ''}`}>
      {node.label}
    </span>
  </li>
);

const PanelHeader: React.FC<{ title: string; dots: string; className: string }> = ({ title, dots, className }) => (
  <div className={`flex shrink-0 items-center border-r-2 border-[#cccedb] pb-1 pr-5 text-[28px] text-[#444444] ${className}`}>
    <h2 className="whitespace-nowrap">{title}</h2>
    <Dots id={dots} className="ml-3 mr-2.5 h-[13px] min-w-0 flex-1" />
    <button aria-label="Panel menu">
      <Icon w={22} h={12}>
        <path d="M0 0h22L11 12z" fill="#1e1e1e" />
      </Icon>
    </button>
    <button aria-label="Pin" className="ml-[17px]">
      <Icon w={22} h={30}>
        <path d="M6 2h10v16H6zM1 18h20M11 18v11" stroke="#1e1e1e" strokeWidth="2" />
        <path d="M13 2h3v16h-3z" fill="#1e1e1e" />
      </Icon>
    </button>
    <button aria-label="Maximize" className="ml-[17px]">
      <Icon w={27} h={26}>
        <path d="M1 1h25v24H1z" stroke="#1e1e1e" strokeWidth="2" />
        <path d="M0 0h27v5H0z" fill="#1e1e1e" />
      </Icon>
    </button>
    <button aria-label="Close" className="ml-4">
      <Icon w={22} h={22}>
        <path d="M2 1l18 20M20 1L2 21" stroke="#1e1e1e" strokeWidth="4" />
      </Icon>
    </button>
  </div>
);

/* ---------- details table ---------- */

interface DetailRow {
  name: string;
  value?: string;
  check?: boolean;
}

const details: DetailRow[] = [
  { name: 'Display' },
  { name: 'Display Style', value: 'Use Geometry Se...' },
  { name: 'Defaults' },
  { name: 'Physics Preference', value: 'Mechanical' },
  { name: 'Element Order', value: 'Program Control...' },
  { name: 'Element Size', value: 'Default', check: true },
  { name: 'Sizing' },
  { name: 'Use Adaptive Sizing', value: 'Yes' },
  { name: 'Resolution', value: '4' },
  { name: 'Mesh Defeaturing', value: 'Yes' },
  { name: 'Defeature Size', value: 'Default', check: true },
  { name: 'Transition', value: 'Fast' },
  { name: 'Span Angle Center', value: 'Coarse' },
];

const DetailsTable = () => (
  <table className="-ml-5 w-[568px] shrink-0 table-fixed border-collapse bg-white text-[27px] leading-8 text-[#1e1e1e]">
    <colgroup>
      <col className="w-[319px]" />
      <col />
    </colgroup>
    <tbody>
      {details.map((row) => (
        <tr key={row.name} className="h-[45px] border-2 border-[#a0a0a0]">
          {row.value === undefined ? (
            <th colSpan={2} className="p-0 pl-px text-left font-bold">{row.name}</th>
          ) : (
            <>
              <th scope="row" className="whitespace-nowrap border-r-2 border-[#a0a0a0] p-0 pl-px text-left font-normal">
                {row.check ? (
                  <label className="flex items-center gap-2.5 pl-0.5">
                    <input type="checkbox" className="h-[29px] w-[28px] appearance-none border-2 border-[#c4c4c4] bg-white" />
                    {row.name}
                  </label>
                ) : (
                  row.name
                )}
              </th>
              <td className="whitespace-nowrap p-0 pl-2">{row.value}</td>
            </>
          )}
        </tr>
      ))}
    </tbody>
  </table>
);

const Sidebar = () => (
  <aside className="flex w-[600px] shrink-0 flex-col overflow-hidden bg-[#eeeef2] pr-2.5">
    <PanelHeader title="Outline" dots="outlineDots" className="-ml-[46px] h-14" />
    <div className="flex h-[57px] shrink-0 text-[28px]">
      <div className="relative w-[244px]">
        <select aria-label="Filter by" className="h-full w-full appearance-none border-2 border-l-0 border-[#cccedb] bg-white pl-1 text-[#333333]">
          <option>Name</option>
        </select>
        <span className="pointer-events-none absolute inset-y-0 right-2.5 flex items-center">
          <Caret w={18} />
        </span>
      </div>
      <input aria-label="Search outline" placeholder="Search Outline" className="ml-0.5 w-[224px] border-2 border-[#cccedb] bg-white px-2 placeholder:text-[#a6a6a6]" />
      <button aria-label="Expand filters" className="ml-3 pb-1">
        <Icon w={31} h={20}>
          <path d="M2 2l13 14L29 2" stroke={GOLD} strokeWidth="4" />
        </Icon>
      </button>
      <button aria-label="Outline options" className="ml-[17px] mt-5">
        <Caret color="#111111" />
      </button>
    </div>
    <div className="relative mt-1 min-h-0 flex-1 overflow-hidden bg-white pt-0.5 font-['Noto_Sans',sans-serif] text-black">
      <svg className="absolute left-0 top-0 h-[600px] w-[300px]" aria-hidden="true">
        <g stroke="#808080" strokeWidth="2" strokeDasharray="2 3">
          <path d="M0 62h9M39 82v180M39 102h36M39 142h36M39 182h36M39 222h36M39 262h36" />
          <path d="M106 283v140M106 302h36M106 342h36M106 382h36M106 422h36" />
          <path d="M173 443v100M173 462h36M173 502h36M173 542h36" />
        </g>
      </svg>
      <ul className="relative">
        {nodes.map((node) => (
          <TreeRow key={node.label} node={node} />
        ))}
      </ul>
    </div>
    <div className="mt-[11px] flex h-[595px] shrink-0 flex-col overflow-hidden border-t-2 border-[#cccedb]">
      <PanelHeader title={'Details of "Mesh"'} dots="detailsDots" className="-ml-[46px] h-12" />
      <div className="flex min-h-0 flex-1 items-stretch overflow-hidden">
        <div className="overflow-hidden">
          <DetailsTable />
        </div>
        <div className="ml-1 flex w-[37px] flex-col items-center bg-[#f0f0f0] pb-[12px] pt-[14px]">
          <Icon w={20} h={18}>
            <path d="M2 15l8-10 8 10" stroke="#606060" strokeWidth="5" />
          </Icon>
          <div className="mt-2.5 h-[263px] w-full bg-[#cdcdcd]" />
          <div className="flex-1" />
          <Icon w={20} h={18}>
            <path d="M2 3l8 10 8-10" stroke="#606060" strokeWidth="5" />
          </Icon>
        </div>
      </div>
    </div>
  </aside>
);

/* ---------- meshed plate ---------- */

const sideInner = toPts(
  '2464,455 2484,462 2519,482 2544,518 2554,558 2557,605 2560,650 2565,695 2567,741 2570,787 2573,832 2577,878 2580,924 2584,969 2586,1014 2589,1061 2593,1107 2596,1152 2599,1198 2604,1244 2606,1290 2609,1334 2612,1379 2606,1422',
);
const sideOuter = toPts(
  '2539,439 2560,446 2589,469 2613,503 2624,544 2627,589 2630,636 2633,682 2637,727 2639,772 2642,819 2646,865 2649,910 2651,955 2656,1002 2659,1047 2661,1093 2664,1139 2669,1185 2672,1229 2674,1274 2677,1323 2681,1366 2677,1410',
);
const wallFront = toPts('2077,863 2038,879 2008,910 1989,950 1987,994 1997,1038 2021,1077 2054,1105 2094,1119 2147,1112');
const wallBack = toPts('2117,861 2100,872 2075,897 2059,937 2057,980 2067,1025 2088,1062 2122,1089 2150,1102 2166,1103');
const opening = toPts(
  '2117,861 2140,866 2159,875 2193,901 2215,940 2223,985 2224,1010 2220,1035 2206,1069 2175,1102 2157,1103 2122,1089 2088,1062 2067,1025 2057,980 2059,937 2075,897 2100,872',
);
const face =
  '1692,485 1675,489 1656,499 1640,508 1626,521 1614,537 1606,557 1601,567 1599,578 1599,599 1604,642 1611,734 1620,872 1627,1000 1640,1147 1649,1285 1657,1419 1659,1438 1669,1461 1679,1479 1692,1494 1708,1508 1726,1517 1744,1525 1803,1525 1983,1517 2200,1507 2349,1501 2560,1490 2606,1422';

// Element edges, one list per quarter of the plate.
const upperLeft = [
  '250,258 287,323 357,325 457,342 560,345 672,345 782,335 895,325 1012,316 1122,308 1232,302 1338,296 1448,292',
  '172,315 248,395 345,450 435,482 547,492 663,487 782,470 900,457 1012,443 1130,430 1240,422 1350,414 1458,407',
  '120,410 213,465 292,548 385,640 530,637 658,630 778,612 900,588 1012,570 1130,560 1247,552 1357,544 1465,534',
  '287,323 248,395 213,465 173,525 103,520',
  '115,632 200,608 292,548 345,450',
  '173,525 200,608 245,715 262,832 267,962 267,1090 267,1215 272,1335 272,1465',
  '127,752 245,715 385,648',
  '133,872 262,832 395,798 522,782 658,772 788,755 900,720 1012,695 1125,686 1240,685 1357,672 1470,660',
  '138,990 267,962 395,940 527,927 658,920 798,905 915,865 1012,803 1092,828 1218,825 1345,802 1470,792',
  '150,1110 267,1090 390,1070 515,1070 658,1070 810,1052 997,987 1180,960 1335,920 1480,908',
  '157,1233 267,1215 380,1200 502,1193 627,1237 817,1193 993,1168 1180,1080 1333,1040 1475,1025',
  '163,1352 272,1335 380,1326 482,1326 560,1330 627,1237 690,1375 697,1515',
  '175,1470 272,1465 380,1458 477,1448 582,1428 690,1375 815,1345 935,1360 1042,1405 1122,1437',
  '993,1168 1105,1275 1170,1332',
  '1042,1405 1105,1275 1218,1185 1348,1135 1465,1130',
  '1180,1080 1218,1185 1250,1252',
  '345,222 357,325 345,450',
  '457,220 457,342 435,482 385,640 395,798 395,940 390,1070 380,1200 380,1326 380,1458',
  '567,213 560,345 547,492 530,637 522,782 527,927 515,1070 502,1193 482,1326 477,1448',
  '672,205 672,345 663,487 658,630 658,772 658,920 658,1070 627,1237',
  '782,200 782,335 782,470 778,612 788,755 798,905 810,1052 817,1193 815,1345 798,1500',
  '893,197 895,325 900,457 900,588 900,720 915,865 997,987 993,1168 935,1360 912,1522',
  '1005,195 1012,316 1012,443 1012,570 1012,695 1012,803',
  '1115,188 1122,308 1130,430 1130,560 1125,686 1092,828 997,987',
  '1222,185 1232,302 1240,422 1247,552 1240,685 1218,825 1180,960 1180,1080',
  '1332,182 1338,296 1350,414 1357,544 1357,672 1345,802 1335,920 1333,1040 1348,1135 1350,1208',
  '1443,178 1448,292 1458,407 1465,534 1470,660 1470,792 1480,908 1475,1025 1465,1130 1460,1208',
  '560,1330 582,1428',
];

const upperRight = [
  '-15,292 97,285 207,279 315,277 422,271 533,267 640,258 748,252 855,246 937,248 1003,265 1043,215',
  '-5,407 103,398 213,392 323,390 430,388 540,382 645,370 750,358 855,352 940,350 1023,338 1108,308',
  '2,534 110,521 222,515 330,509 442,508 547,500 653,488 757,468 852,460 948,450 1040,437 1135,412',
  '7,660 120,645 232,638 340,638 448,638 553,627 658,602 757,582 857,568 952,553 1050,548 1142,535',
  '7,792 128,784 240,784 352,783 463,780 567,757 663,715 762,692 860,684 952,672 1052,664 1150,652',
  '683,807 762,804 853,798 957,790 1057,785 1162,770',
  '17,908 135,913 252,920 367,927 487,920 625,897 748,922 853,913 962,905 1065,897 1168,890',
  '12,1025 135,1050 258,1075 380,1080 508,1070 630,1050 743,1040 860,1030 967,1023 1072,1018 1177,1012',
  '2,1130 122,1165 258,1235 405,1235 537,1225 653,1193 762,1160 872,1142 978,1138 1082,1136 1185,1130',
  '727,1343 792,1252 878,1258 983,1258 1088,1252 1193,1250',
  '247,1412 330,1392 450,1378 580,1363 727,1343 865,1383 983,1383 1097,1378 1203,1370',
  '273,1528 362,1532 480,1532 612,1507 737,1495 867,1502 992,1500 1102,1497 1212,1488',
  '92,180 97,285 103,398 110,521 120,645 128,784 135,913 135,1050 122,1165 102,1240',
  '198,175 207,279 213,392 225,515 232,638 240,784 252,920 258,1075 258,1235 330,1392 362,1532',
  '258,1235 190,1308',
  '305,168 315,277 323,390 332,509 340,638 352,783 367,927 380,1080 405,1235 450,1378 480,1532',
  '415,163 422,271 430,388 442,508 448,638 463,780 487,920 508,1070 537,1225 580,1363 612,1507',
  '527,158 533,267 540,382 547,500 553,627 567,757 625,897 630,1050 653,1193 727,1343 737,1495',
  '637,152 640,258 647,370 653,488 658,602 663,715 683,807 625,897',
  '743,148 748,252 752,358 757,468 757,582 762,692 762,804 748,922 743,1040 762,1160 792,1252',
  '853,142 855,246 855,352 850,460 857,568 860,684 853,798 853,913 860,1030 872,1142 878,1258 865,1383 867,1502',
  '950,162 937,248 942,350 948,450 952,553 952,672 957,790 962,905 967,1023 978,1138 983,1258 985,1383 992,1500',
  '1003,265 1023,338 1040,437 1050,548 1052,664 1057,785 1065,897 1072,1018 1082,1136 1088,1252 1097,1378 1102,1497',
];

const lowerLeft = [
  '78,110 180,105 280,98 383,92 487,70 590,43 693,33 807,50 918,117 1012,77',
  '85,212 183,208 285,202 390,195 492,178 587,157 685,145 780,172 860,243 935,350 1020,452 1118,527 1215,620',
  '93,312 193,312 300,308 402,302 508,290 600,265 677,235 738,285 800,352 870,475 962,558 1063,630 1145,663',
  '105,418 210,416 317,412 430,412 543,398 650,365 738,285 780,172',
  '110,520 222,522 338,525 453,520 580,513 707,463 800,352 860,243 918,117 990,243 1068,330 1187,440',
  '1038,175 990,243 935,350 870,475 775,600',
  '1100,262 1068,330 1020,452 962,558 910,662 903,782 913,910 932,1025 957,1137 977,1245',
  '1187,325 1187,440 1118,527 1063,630 1030,710 1025,820 1035,930 1050,1030 1070,1140 1088,1242',
  '118,627 238,630 365,635 488,635 620,630 775,600 910,662 1030,710 1152,755 1250,732 1357,702 1462,685 1585,664',
  '128,728 258,738 387,748 517,755 648,755 775,755 903,782 1025,820 1148,838 1268,833 1375,818 1488,803 1585,785',
  '137,827 265,838 400,860 533,880 667,888 790,895 913,910 1035,930 1155,935 1278,940 1390,930 1501,911',
  '142,930 265,937 397,962 540,1015 685,1013 815,1015 932,1025 1050,1030 1167,1035 1285,1040 1397,1035 1508,1019',
  '148,1028 255,1023 368,1045 460,1092 518,1178 540,1258',
  '180,1122 250,1090 315,1128 385,1165 440,1203 518,1180 612,1142 718,1130 838,1137 957,1137 1070,1140 1185,1142 1298,1137 1410,1133 1520,1123',
  '540,1015 460,1092 385,1165 330,1248',
  '368,1045 315,1128 240,1197',
  '440,1203 430,1265',
  '540,1015 612,1142 648,1255',
  '168,3 180,105 183,208 193,312 210,416 222,522 238,630 258,738 265,838 265,937 255,1023 250,1090',
  '275,-4 280,98 287,202 300,308 317,412 338,525 365,635 387,748 402,860 397,962 368,1045',
  '372,-13 383,92 390,195 402,302 430,412 453,520 488,635 517,755 533,880 540,1015',
  '478,-30 487,70 492,178 508,290 543,398 580,513 620,630 648,755 667,888 685,1013 718,1130 755,1252',
  '591,43 587,157 600,265 650,365 707,463 775,600 775,755 790,895 812,1015 838,1137 865,1248',
  '693,33 685,145 677,235',
  '807,50 780,172',
  '937,-50 922,40 918,117',
  '1145,663 1152,755 1148,838 1155,935 1167,1035 1185,1142 1193,1235',
  '1145,663 1215,620 1295,580 1412,558 1558,548',
  '1215,620 1250,732 1268,833 1278,940 1285,1040 1298,1137 1305,1235',
  '1187,440 1295,580 1357,702 1375,818 1390,930 1397,1035 1410,1133 1415,1228',
  '1292,357 1333,447 1412,558 1462,685 1488,803 1500,912 1508,1025 1520,1127 1527,1225',
  '1187,440 1333,447 1512,440',
  '1405,350 1512,440',
];

const lowerRight = [
  '165,212 240,305 398,240 535,217 665,200 777,192 893,182 1008,178 1112,163',
  '240,305 150,360 120,327',
  '150,360 120,455 50,590 95,735 122,890 142,1050 155,1198 158,1353 162,1500 170,1638',
  '40,425 120,453 262,435 395,402 535,378 662,360 783,345 900,328 1012,315 1122,303',
  '50,590 240,577 390,553 535,532 662,518 787,497 907,475 1018,457 1132,440',
  '95,735 240,720 388,703 532,688 662,675 795,652 910,625 1025,600 1138,577',
  '122,890 255,873 390,857 527,847 657,838 790,815 912,770 1042,722 1148,715',
  '25,1075 142,1050 265,1025 390,1012 520,1003 645,1003 782,995 935,887 1055,855 1160,853',
  '38,1220 155,1198 272,1185 383,1168 502,1168 617,1168 705,1208 803,1215 878,1262 927,1282 965,1243 1025,1212 1088,1225 1182,1257',
  '852,1075 957,1010 1070,985 1165,990',
  '918,1160 998,1120 1080,1108 1172,1122',
  '45,1365 160,1353 272,1340 385,1332 535,1335 593,1342 700,1350 790,1357 867,1363 940,1363 995,1322 1035,1290 1075,1312 1165,1385',
  '57,1503 160,1497 385,1493 500,1490',
  '782,995 852,1075 918,1160 965,1243 995,1322 1030,1385 1075,1312 1088,1225',
  '1025,1212 1035,1290',
  '918,1160 878,1262 867,1385',
  '852,1075 803,1215 790,1385',
  '927,1282 940,1385',
  '258,73 245,305 262,435 240,577 240,720 257,873 267,1025 272,1185 272,1340 275,1500 279,1632',
  '376,77 397,240 395,402 388,553 390,703 390,857 390,1012 385,1168 385,1332 385,1500 390,1627',
  '507,48 533,217 535,378 535,532 530,688 527,847 520,1003 502,1168 490,1335 490,1385',
  '633,36 663,200 663,360 662,518 662,675 657,838 645,1003 617,1168 593,1342 593,1385',
  '763,43 777,192 783,345 790,497 797,652 790,815 782,995 705,1208 697,1385',
  '888,43 895,182 903,328 907,475 907,625 912,770 935,887 957,1010 998,1120 1025,1212',
  '998,40 1008,178 1012,315 1018,457 1025,600 1042,722 1055,855 1070,985 1082,1108 1088,1225',
];

const patches = [
  { lines: upperLeft, place: 'translate(1560 400) scale(.3827)' },
  { lines: upperRight, place: 'translate(2120 400) scale(.3827)' },
  { lines: lowerLeft, place: 'translate(1600 960) scale(.3827 .4464)' },
  { lines: lowerRight, place: 'translate(2160 960) scale(.3827 .3333)' },
];

const Band = ({ a, b, fill }: { a: Pt[]; b: Pt[]; fill: string }) => (
  <>
    <polygon points={[...a, ...[...b].reverse()].join(' ')} fill={fill} />
    {[0, 0.25, 0.5, 0.75, 1].map((t) => (
      <path key={t} d={smooth(between(a, b, t))} fill="none" />
    ))}
    {a.map((p, i) => (
      <path key={i} d={`M${p[0]} ${p[1]}L${b[i][0]} ${b[i][1]}`} />
    ))}
  </>
);

const Plate = () => (
  <svg viewBox="628 268 2627 1428" preserveAspectRatio="xMidYMid meet" className="absolute inset-0 h-full w-full" role="img" aria-label="Meshed plate">
    <defs>
      <linearGradient id="sideShade" gradientUnits="userSpaceOnUse" x1="0" y1="440" x2="0" y2="1420">
        <stop offset="0" stopColor="#a8a8a4" />
        <stop offset=".05" stopColor="#d9d9d5" />
        <stop offset=".16" stopColor="#bababa" />
        <stop offset=".4" stopColor="#ababab" />
        <stop offset=".94" stopColor="#a6a6a6" />
        <stop offset="1" stopColor="#8c8c8c" />
      </linearGradient>
      <linearGradient id="wallShade" gradientUnits="userSpaceOnUse" x1="0" y1="860" x2="0" y2="1120">
        <stop offset="0" stopColor="#777777" />
        <stop offset=".3" stopColor="#c4c4c2" />
        <stop offset=".7" stopColor="#d2d2d0" />
        <stop offset="1" stopColor="#c8c8c6" />
      </linearGradient>
      <linearGradient id="skyShade" gradientUnits="userSpaceOnUse" x1="0" y1="268" x2="0" y2="1696">
        <stop offset="0" stopColor="#6a8adc" />
        <stop offset="1" stopColor="#fdfdff" />
      </linearGradient>
    </defs>
    <g stroke="#050505" strokeWidth="2.500">
      <polygon points="1692,485 1705,481 1744,472 1878,466 1996,460 2119,454 2298,448 2418,442 2480,439 2539,439 2484,462 2365,459 2112,470 1859,479 1735,486" fill="#0a0a0a" />
      <path d="M1732 479h10M1761 472h10M1790 479h10M1832 470h22M1888 467h8M1905 473h10M1938 465h11M1990 461h10M2012 466h12M2060 460h14M2085 464h10M2130 459h12M2184 454h10M2204 460h12M2244 454h14M2274 458h10M2320 452h10M2360 448h12M2374 449h9M2396 454h10M2432 447h10M2446 450h9M2482 442h10" stroke="#a9a9a4" />
      <polygon points={`${face} ${[...sideInner].reverse().join(' ')} 2365,458 2112,468 1859,477 1735,484`} fill="#666666" />
      <Band a={sideInner} b={sideOuter} fill="url(#sideShade)" />
      <Band a={wallFront} b={wallBack} fill="url(#wallShade)" />
      <path d={smooth(opening, true)} fill="url(#skyShade)" />
      <path d="M2120 1111l27-6 16-2-8 7-28 7z" fill="#0a0a0a" />
      {patches.map(({ lines, place }) => (
        <g key={place} transform={place} fill="none">
          {lines.map((points) => (
            <polyline key={points} points={points} vectorEffect="non-scaling-stroke" />
          ))}
        </g>
      ))}
    </g>
    <g fontFamily="'Noto Sans', sans-serif" fontSize="26" textAnchor="middle" fill="#111111">
      <path d="M1705 1581h650v27h-650z" fill="#fdfdff" stroke="#111" strokeWidth="2" />
      <path d="M1705 1580h218v29h-218zM2138 1580h217v29h-217z" fill="#000" />
      <text x="1706" y="1572">0.000</text>
      <text x="2138" y="1572">5.000</text>
      <text x="1921" y="1644">2.500</text>
      <text x="2358" y="1644">7.500</text>
    </g>
  </svg>
);

const ErrorPopup = () => (
  <div role="alert" className="absolute -bottom-[5px] right-[226px] h-[280px] w-[680px] border-[3px] border-black bg-[#f4f4f4] text-[#2a2a2a]">
    <h3 className="ml-[13px] mt-[13px] text-[27px] font-bold leading-8 text-black">Error</h3>
    <div className="mt-[14px] flex">
      <svg width="66" height="66" viewBox="0 0 66 66" className="ml-[18px] mt-1 shrink-0" aria-hidden="true">
        <defs>
          <linearGradient id="crossFill" x1="0" y1="0" x2="1" y2="1">
            <stop offset="0" stopColor="#f0503a" />
            <stop offset=".5" stopColor="#e01808" />
            <stop offset="1" stopColor="#8c0c08" />
          </linearGradient>
        </defs>
        <g strokeLinejoin="round">
          <path d="M16 4l17 17L50 4l12 13-16 16 16 16-12 13-17-17-17 17L4 49l16-16L4 17z" fill="#fff" stroke="#b0504c" strokeWidth="5" />
          <path d="M16 4l17 17L50 4l12 13-16 16 16 16-12 13-17-17-17 17L4 49l16-16L4 17z" fill="#fff" stroke="#fff" strokeWidth="1.5" />
          <path d="M17 8l16 16L49 8l10 10-16 15 16 15-10 10-16-16-16 16L7 48l16-15L7 18z" fill="url(#crossFill)" />
        </g>
      </svg>
      <p className="ml-[27px] w-[500px] text-[28px] leading-[38px]">
        An unknown error occurred during solution. Check the Solver Output on the Solution Information object for possible causes.
      </p>
    </div>
  </div>
);

/* ---------- yellow marker strokes ---------- */

const ringOuter = toPts(
  '208,290 208,168 260,145 370,133 620,122 800,132 1000,152 1080,175 1130,225 1165,310 1200,420 1222,560 1225,700 1222,830 1205,920 1180,970 1130,1020 1080,1062 1020,1095 920,1106 780,1104 650,1090 560,1065 490,1045 430,1005 360,965 330,920 310,860 285,740 240,570 228,450 218,330',
);
const ringInner = toPts(
  '245,310 270,285 350,262 480,252 640,245 800,255 950,275 1060,302 1110,350 1140,430 1170,510 1195,620 1202,700 1190,790 1160,850 1100,910 1015,968 890,980 680,968 510,920 390,845 345,770 320,690 300,600 255,420 247,340',
);

const Marker = () => (
  <svg viewBox="0 0 3255 1729" preserveAspectRatio="none" className="pointer-events-none absolute inset-0 z-20 h-full w-full mix-blend-multiply" aria-hidden="true">
    <path d="M0 1523H98L212 1519l80-1v-5l55-3 33-7 28-2h40v42l-39 1v12l-21 3-37 2-65-1-82 3-122 1-82 1z" fill="#ffff00" />
    <path transform="translate(2200 1360) scale(.673 .3333)" d={smooth(ringOuter, true) + smooth(ringInner, true)} fillRule="evenodd" fill="#ffff00" />
  </svg>
);

export default function App() {
  return (
    <div className="relative flex h-screen flex-col overflow-hidden bg-white pb-[22px] pl-7 font-['Open_Sans','Noto_Sans',sans-serif]">
      <div className="flex min-h-0 flex-1 flex-col">
        <Ribbon />
        <div className="flex min-h-0 flex-1">
          <Sidebar />
          <main className="flex min-w-0 flex-1 flex-col">
            <Toolbar />
            <div className="relative z-10 min-h-0 flex-1 bg-linear-to-b from-[#6a8adc] to-[#fdfdff]">
              <Plate />
              <ErrorPopup />
            </div>
          </main>
        </div>
      </div>
      <footer className="h-[11px] shrink-0 bg-[#007acc]" />
      <Marker />
    </div>
  );
}
